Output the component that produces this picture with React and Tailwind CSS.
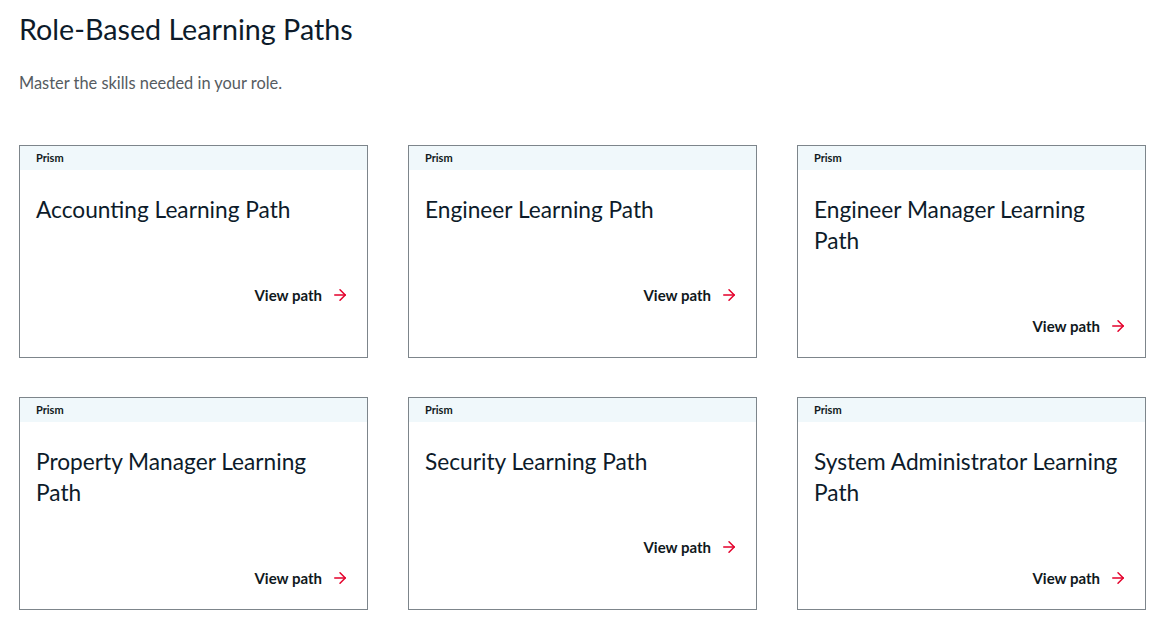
import React from 'react';
import { ArrowRight } from 'lucide-react';

const paths = [
  { id: 'accounting', source: 'Prism', title: 'Accounting Learning Path' },
  { id: 'engineer', source: 'Prism', title: 'Engineer Learning Path' },
  { id: 'engineer-manager', source: 'Prism', title: 'Engineer Manager Learning Path' },
  { id: 'property-manager', source: 'Prism', title: 'Property Manager Learning Path' },
  { id: 'security', source: 'Prism', title: 'Security Learning Path' },
  { id: 'sysadmin', source: 'Prism', title: 'System Administrator Learning Path' },
];

function PathCard({ path }) {
  return (
    <a href="#" className="flex flex-col border border-[#7d858b] bg-white">
      {/* Source band */}
      <div className="h-6 bg-[#f0f8fb] px-4 flex items-center">
        <span className="text-[11px] font-bold text-[#101820]">{path.source}</span>
      </div>

      <div className="flex flex-col px-4 pt-6 pb-[19px]">
        <h3 className="text-[22.7px] leading-[31px] text-[#0d1b2a]">{path.title}</h3>
        <div className="mt-[58px] flex items-center justify-end gap-[9px] pr-[2px]">
          <span className="text-[15px] leading-6 font-bold text-[#101820]">View path</span>
          <ArrowRight size={18} strokeWidth={2} className="text-[#e4002b]" />
        </div>
      </div>
    </a>
  );
}

export default function App() {
  return (
    <div className="min-h-screen bg-white pl-[19px] pr-4 pt-[11px] pb-4 font-['Lato',sans-serif]">
      <h1 className="text-[28.7px] leading-9 text-[#0d1b2a]">Role-Based Learning Paths</h1>
      <p className="mt-6 text-[16.4px] leading-6 text-[#555b61]">Master the skills needed in your role.</p>

      <div className="mt-[50px] grid grid-cols-3 gap-x-10 gap-y-[39px]">
        {paths.map(path => (
          <PathCard key={path.id} path={path} />
        ))}
      </div>
    </div>
  );
}
